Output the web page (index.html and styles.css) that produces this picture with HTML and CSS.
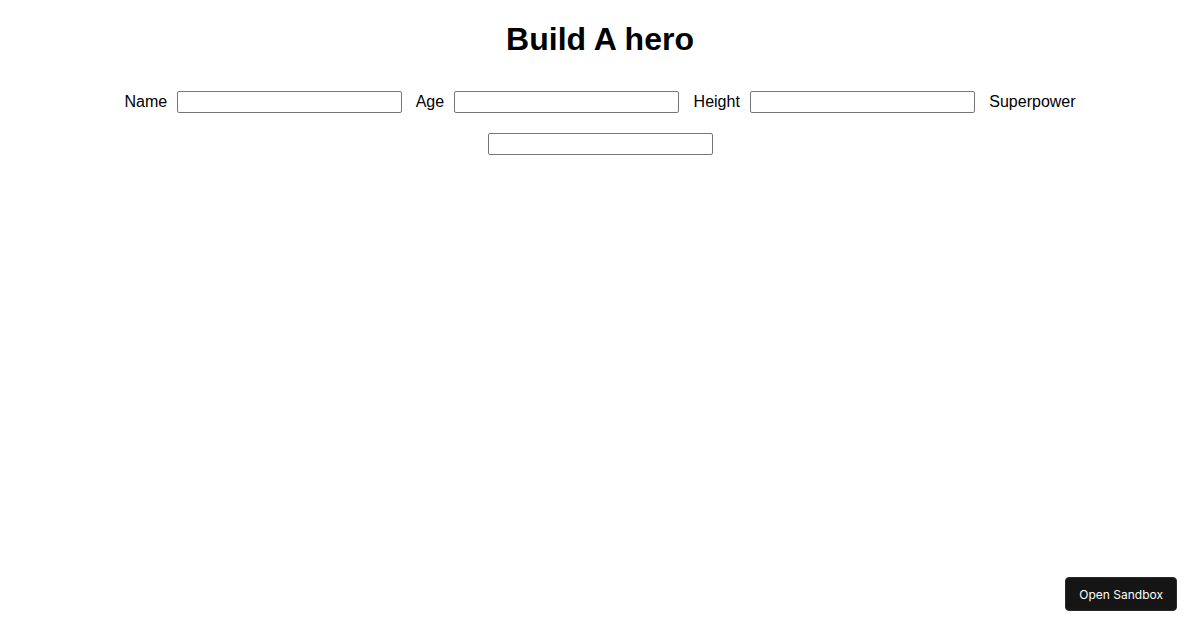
FILE: index.html
```html
<!DOCTYPE html>
<html lang="en">
<head>
<meta charset="utf-8">
<title>Build A hero</title>
<link rel="stylesheet" href="styles.css">
</head>
<body>
<div class="app">
  <h1 class="title">Build A hero</h1>
  <form class="hero-form"><label class="field-label">Name</label><input class="field-input" type="text"> <label class="field-label">Age</label><input class="field-input" type="text"> <label class="field-label">Height</label><input class="field-input" type="text"> <label class="field-label">Superpower</label><input class="field-input" type="text"></form>
</div>
<a class="sandbox-btn" href="#">Open Sandbox</a>
</body>
</html>
```

FILE: styles.css
```css
html {
  background: #ffffff;
}

body {
  margin: 0 8px;
  padding: 0;
  font-family: "Liberation Sans", Arial, sans-serif;
  color: #000000;
}

.app {
  text-align: center;
}

.title {
  font-size: 32px;
  font-weight: bold;
  margin: 21.44px 0;
}

.hero-form {
  margin: 0;
  padding-top: 1px;
  font-size: 16px;
  text-align: center;
}

.field-label {
  font-size: 16px;
}

.field-input {
  display: inline-block;
  box-sizing: border-box;
  width: 225px;
  height: 22px;
  margin: 10px;
  padding: 1px 2px;
  border: 1px solid #767676;
  border-radius: 2px;
  font-family: "Liberation Sans", Arial, sans-serif;
  font-size: 13.33px;
  background: #ffffff;
  vertical-align: baseline;
}

.sandbox-btn {
  position: fixed;
  right: 23px;
  bottom: 19px;
  box-sizing: border-box;
  height: 34px;
  padding: 0 13px;
  display: flex;
  align-items: center;
  background: #151515;
  color: #ffffff;
  border-radius: 4px;
  font-family: Inter, "Liberation Sans", sans-serif;
  font-size: 12px;
  text-decoration: none;
  border: 1px solid #2a2a2a;
}
```
